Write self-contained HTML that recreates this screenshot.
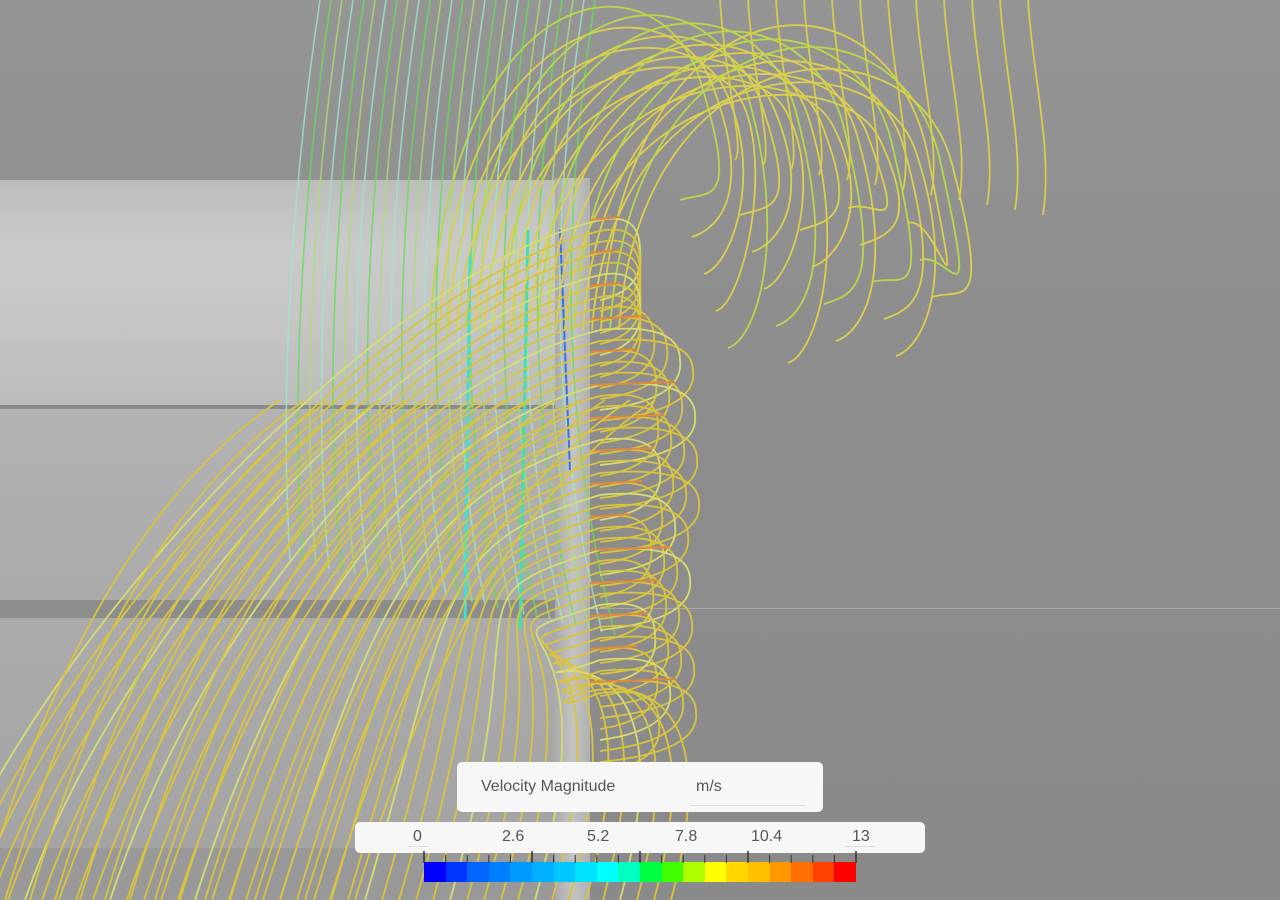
<!DOCTYPE html>
<html><head><meta charset="utf-8"><style>
html,body{margin:0;padding:0;}
body{width:1280px;height:900px;overflow:hidden;position:relative;background:linear-gradient(#959595,#8d8d8d 40%,#8a8a8a);font-family:"Liberation Sans",sans-serif;}
.b{position:absolute;left:0;width:560px;}
.card{position:absolute;background:#f7f7f7;border-radius:5px;color:#555;}
.card span{position:absolute;top:6px;}
</style></head><body>
<div class="b" style="top:180px;height:228px;background:linear-gradient(#bdbdbd,#cacaca 30%,#c6c6c6 60%,#bcbcbc)"></div>
<div class="b" style="top:405px;height:4px;background:#8a8a8a"></div>
<div class="b" style="top:409px;height:192px;background:linear-gradient(#b3b3b3,#aaaaaa)"></div>
<div class="b" style="top:600px;height:18px;background:#8d8d8d"></div>
<div class="b" style="top:618px;height:230px;background:linear-gradient(#ababab,#a4a4a4)"></div>
<div class="b" style="top:848px;height:52px;background:#999"></div>
<div style="position:absolute;left:555px;top:178px;width:35px;height:722px;background:linear-gradient(90deg,#aaa,#c4c4c4,#b0b0b0)"></div>
<div style="position:absolute;left:590px;top:608px;width:690px;height:1px;background:#aaa"></div>
<svg id="s" width="1280" height="900" style="position:absolute;left:0;top:0" fill="none" stroke-width="2"></svg>
<div class="card" style="left:457px;top:762px;width:366px;height:50px;font-size:16px">
<span style="left:24px;top:16px">Velocity Magnitude</span>
<span style="left:239px;top:16px">m/s</span>
<div style="position:absolute;left:233px;top:43px;width:115px;height:1px;background:#ddd"></div></div>
<div class="card" style="left:355px;top:822px;width:570px;height:31px;font-size:16px;">
<span style="left:58px">0</span>
<span style="left:147px">2.6</span>
<span style="left:232px">5.2</span>
<span style="left:320px">7.8</span>
<span style="left:396px">10.4</span>
<span style="left:497px">13</span>
<div style="position:absolute;left:53px;top:24px;width:20px;height:1px;background:#ddd"></div>
<div style="position:absolute;left:490px;top:24px;width:30px;height:1px;background:#ddd"></div></div>
<div id="bar" style="position:absolute;left:424px;top:862px;width:432px;height:20px;display:flex"></div>
<svg id="t" width="440" height="12" style="position:absolute;left:420px;top:851px"></svg>
<script>
var c=["#0000ff","#0033ff","#0066ff","#0080ff","#0099ff","#00b0ff","#00c8ff","#00e0ff","#00ffff","#00ffc0","#00ff40","#40ff00","#b0ff00","#ffff00","#ffd800","#ffc000","#ff9800","#ff7000","#ff4000","#ff0000"];
var bar=document.getElementById('bar');c.forEach(function(k){var d=document.createElement('div');d.style.flex='1';d.style.background=k;bar.appendChild(d);});
var t=document.getElementById('t'),h='';for(var i=0;i<=20;i++){var x=4+i*21.6;var big=i%5==0;h+='<line x1="'+x+'" x2="'+x+'" y1="'+(big?0:4)+'" y2="12" stroke="#333" stroke-width="'+(big?1.5:1)+'"/>';}t.innerHTML=h;
var s=document.getElementById('s'),p='';
function P(d,col,w,o){p+='<path d="'+d+'" stroke="'+col+'" stroke-width="'+(w||2)+'" opacity="'+(o||1)+'"/>';}
for(var i=0;i<26;i++){var x=280+i*11;var col=i%3==0?'#9fe6c8':(i%3==1?'#66dd55':'#a8e070');P('M'+(x+40)+' 0 C'+(x+10)+' 200,'+(x)+' 400,'+(x+10+i*2)+' '+(560+i*3),col,1.6,0.8);}
P('M470 250 L465 620','#40e0d0',3);P('M528 230 L520 630','#40e0b0',3);P('M560 230 L570 470','#3a6ff0',2);
for(var i=0;i<22;i++){var x0=430+i*9,xe=700+i*12,ye=190+((i*37)%170),pk=((i*29)%110)-30;P('M'+x0+' 330 C'+(x0+20)+' '+pk+','+(xe-40)+' '+(pk-20)+','+xe+' '+(80+i*4)+' S'+(xe+10)+' '+ye+','+(xe-20)+' '+(ye+10),i%4==0?'#b8d84a':'#dccf4e',1.8);}
for(var i=0;i<12;i++){var x=720+i*28;P('M'+x+' 0 C'+(x+5)+' 80,'+(x+25)+' 150,'+(x+15)+' '+(160+i*5),'#d8cd4c',1.8);}
for(var i=0;i<44;i++){var x0=-60+i*17,ye=220+i*11;var col=i%5==0?'#d8dc70':'#d9c440';
var lx=ye>300?650+((i*13)%50):640;
P('M'+x0+' 900 C'+(x0+90)+' '+(650-i*2)+','+(380+i*2)+' '+(ye+50)+',600 '+ye+' Q'+lx+' '+(ye-8)+','+lx+' '+(ye+30)+' Q'+(lx+5)+' '+(ye+70)+',600 '+(ye+80),col,1.8);
if(i%3==0)P('M590 '+ye+' L'+(lx-20)+' '+(ye-3),'#e08a3a',2);}
for(var i=0;i<16;i++){var x0=-20+i*25;P('M'+x0+' 900 C'+(x0+60)+' 700,'+(x0+150)+' 500,'+(x0+300)+' 400','#d9c440',1.8);}
s.innerHTML=p;
</script>
</body></html>
